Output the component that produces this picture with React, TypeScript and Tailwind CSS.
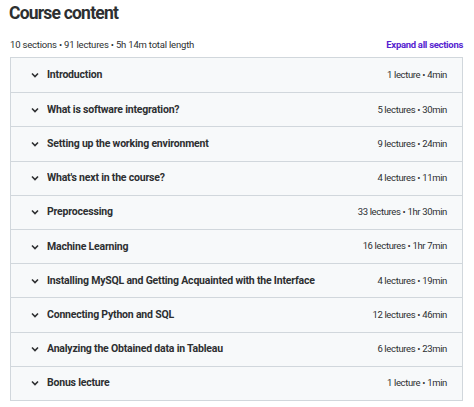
const sections = [
  { title: "Introduction", meta: "1 lecture • 4min" },
  { title: "What is software integration?", meta: "5 lectures • 30min" },
  { title: "Setting up the working environment", meta: "9 lectures • 24min" },
  { title: "What's next in the course?", meta: "4 lectures • 11min" },
  { title: "Preprocessing", meta: "33 lectures • 1hr 30min" },
  { title: "Machine Learning", meta: "16 lectures • 1hr 7min" },
  { title: "Installing MySQL and Getting Acquainted with the Interface", meta: "4 lectures • 19min" },
  { title: "Connecting Python and SQL", meta: "12 lectures • 46min" },
  { title: "Analyzing the Obtained data in Tableau", meta: "6 lectures • 23min" },
  { title: "Bonus lecture", meta: "1 lecture • 1min" },
];

function Chevron() {
  return (
    <svg width="10" height="10" viewBox="0 0 10 10" className="shrink-0 text-[#2d2f31]">
      <path d="M2 3.5 L5 6.5 L8 3.5" fill="none" stroke="currentColor" strokeWidth="1.6" />
    </svg>
  );
}

export default function App() {
  return (
    <div className="h-[407px] w-[474px] bg-white font-['Roboto',sans-serif] text-[#2d2f31]">
      {/* header */}
      <h1 className="pl-[9px] pt-[1px] text-[17.5px] font-bold leading-[24px] tracking-[-0.8px]">
        Course content
      </h1>
      <div className="mt-[13px] flex items-center justify-between pl-[10px] pr-[11px] leading-[14px]">
        <span className="text-[9.5px] tracking-[-0.2px] text-[#2d2f31]">
          10 sections • 91 lectures • 5h 14m total length
        </span>
        <span className="text-[9.5px] font-bold tracking-[-0.3px] text-[#5624d0]">Expand all sections</span>
      </div>

      {/* sections */}
      <div className="ml-[10px] mt-[5px] w-[453px] border border-[#d1d7dc]">
        {sections.map((s, i) => (
          <div
            key={i}
            className={`flex h-[34.2px] items-center bg-[#f7f9fa] pl-[19px] pr-[15px] ${
              i > 0 ? "border-t border-[#d1d7dc]" : ""
            }`}
          >
            <Chevron />
            <span className="ml-[7px] flex-1 truncate text-[10.5px] font-bold tracking-[-0.2px]">{s.title}</span>
            <span className="text-[9.5px] tracking-[-0.35px] text-[#2d2f31]">{s.meta}</span>
          </div>
        ))}
      </div>
    </div>
  );
}
